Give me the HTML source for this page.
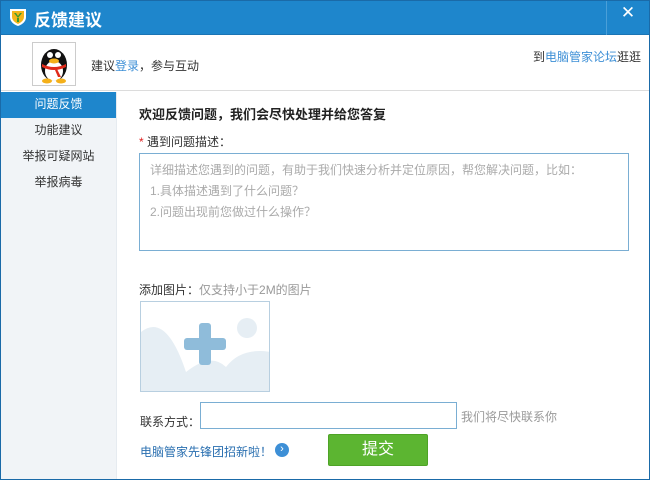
<!DOCTYPE html>
<html><head><meta charset="utf-8"><style>
*{margin:0;padding:0;box-sizing:border-box}
body{width:650px;height:480px;overflow:hidden;font-family:"Liberation Sans","Noto Sans CJK SC",sans-serif;font-size:12px;color:#333;background:#fff;position:relative}
.win{position:absolute;left:0;top:0;width:650px;height:480px;border:1px solid #1a6aa8;}
.title{position:absolute;left:0;top:0;width:650px;height:35px;background:#1e86cc;border-bottom:1px solid #1a74b4}
.title .t{position:absolute;left:34px;top:6px;color:#fff;font-size:17px;font-weight:bold}
.close{position:absolute;left:606px;top:0;width:43px;height:35px;border-left:1px solid #4a9fd8;color:#fff;font-size:17px;text-align:center;line-height:26px}
.hdr{position:absolute;left:1px;top:36px;width:648px;height:55px;border-bottom:1px solid #dcdcdc;background:#fff}
.av{position:absolute;left:31px;top:6px;width:44px;height:44px;border:1px solid #ccc;background:#fff}
.side{position:absolute;left:1px;top:92px;width:116px;height:387px;background:#f1f4f7;border-right:1px solid #e6ebf0}
.side div{height:26px;line-height:25px;text-align:center;font-size:12px;color:#333}
.side .on{background:#1e86cc;color:#fff}
a{color:#3d8fd6;text-decoration:none}
.abs{position:absolute;white-space:nowrap}
.ta{position:absolute;left:139px;top:153px;width:490px;height:98px;border:1px solid #7aaed3;padding:6px 10px;color:#aaa;line-height:21px}
.img{position:absolute;left:140px;top:301px;width:130px;height:91px;border:1px solid #b8cfe0;background:#fff;overflow:hidden}
.inp{position:absolute;left:200px;top:402px;width:257px;height:27px;border:1px solid #7aaed3}
.btn{position:absolute;left:328px;top:434px;width:100px;height:32px;background:#5cb531;border:1px solid #4ea326;border-radius:2px;color:#fff;font-size:16px;text-align:center;line-height:30px}
</style></head><body>
<div class="title">
<svg style="position:absolute;left:9px;top:7px" width="18" height="20" viewBox="0 0 18 20"><path d="M1 2 L17 2 L17 10 Q17 16 9 19 Q1 16 1 10 Z" fill="#fff"/><path d="M3 4 L15 4 L15 10 Q15 14 9 17 Q3 14 3 10Z" fill="#f2b51a"/><path d="M5 6 L9 11 L13 6 L11 6 L9 9 L7 6Z M8 11 L10 11 L10 15 L8 15Z" fill="#3d9a2d"/></svg>
<div class="t">反馈建议</div>
<div class="close">✕</div>
</div>
<div class="hdr">
<div class="av"><svg width="42" height="42" viewBox="0 0 42 42"><ellipse cx="21" cy="22" rx="13" ry="16" fill="#111"/><ellipse cx="21" cy="28" rx="9" ry="10" fill="#fff"/><circle cx="17" cy="12" r="3" fill="#fff"/><circle cx="25" cy="12" r="3" fill="#fff"/><ellipse cx="21" cy="18" rx="5" ry="2.5" fill="#f4b01a"/><path d="M9 21 Q21 27 33 21 L33 24 Q21 30 9 24Z" fill="#e02a1a"/><path d="M24 26 L28 34 L25 34 L22 27Z" fill="#e02a1a"/><ellipse cx="14" cy="38" rx="5" ry="2.5" fill="#f4b01a"/><ellipse cx="28" cy="38" rx="5" ry="2.5" fill="#f4b01a"/></svg></div>
<div class="abs" style="left:90px;top:21px">建议<a>登录</a>，参与互动</div>
<div class="abs" style="left:532px;top:12px">到<a>电脑管家论坛</a>逛逛</div>
</div>
<div class="side"><div class="on">问题反馈</div><div>功能建议</div><div>举报可疑网站</div><div>举报病毒</div></div>
<div class="abs" style="left:139px;top:104px;font-size:13px;font-weight:bold;color:#222">欢迎反馈问题，我们会尽快处理并给您答复</div>
<div class="abs" style="left:139px;top:133px"><span style="color:#e02020">*</span> 遇到问题描述：</div>
<div class="ta">详细描述您遇到的问题，有助于我们快速分析并定位原因，帮您解决问题，比如：<br>1.具体描述遇到了什么问题？<br>2.问题出现前您做过什么操作？</div>
<div class="abs" style="left:139px;top:281px">添加图片：<span style="color:#999">仅支持小于2M的图片</span></div>
<div class="img"><svg width="130" height="91" viewBox="0 0 130 91"><path d="M0 30 Q25 10 45 70 Q70 50 85 65 Q100 45 130 50 L130 91 L0 91Z" fill="#e6eef4"/><circle cx="106" cy="26" r="10" fill="#e6eef4"/><rect x="58" y="21" width="12" height="42" rx="3" fill="#8fbcda"/><rect x="43" y="36" width="42" height="12" rx="3" fill="#8fbcda"/></svg></div>
<div class="abs" style="left:140px;top:413px">联系方式：</div>
<div class="inp"></div>
<div class="abs" style="left:461px;top:408px;color:#999">我们将尽快联系你</div>
<div class="abs" style="left:140px;top:443px;color:#2a6fb0">电脑管家先锋团招新啦！</div>
<div class="abs" style="left:275px;top:443px;width:14px;height:14px;border-radius:50%;background:#3d8fd6;color:#fff;font-size:11px;line-height:13px;text-align:center">›</div>
<div class="btn">提交</div>
<div class="win"></div>
</body></html>
